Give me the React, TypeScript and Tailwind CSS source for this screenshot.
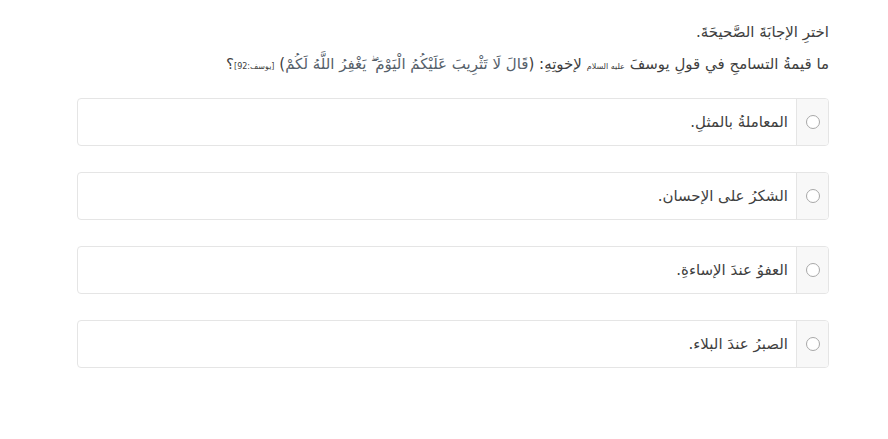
import React from "react";

const options = [
  "المعاملةُ بالمثلِ.",
  "الشكرُ على الإحسان.",
  "العفوُ عندَ الإساءةِ.",
  "الصبرُ عندَ البلاء.",
];

export default function App() {
  return (
    <div
      dir="rtl"
      className="min-h-[439px] w-[888px] bg-white pl-[77px] pr-[59px] pt-[16px]"
      style={{ fontFamily: '"DejaVu Sans", "Noto Sans", sans-serif' }}
    >
      <div className="text-[15px] leading-[32px] text-[#404040]">
        <p>اخترِ الإجابَةَ الصَّحيحَةَ.</p>
        <p>
          ما قيمةُ التسامحِ في قولِ يوسفَ{" "}
          <span className="text-[8px]">عليه السلام</span> لإخوتِهِ: (
          <span className="text-[#56606a]">
            قَالَ لَا تَثْرِيبَ عَلَيْكُمُ الْيَوْمَ ۖ يَغْفِرُ اللَّهُ لَكُمْ
          </span>
          ) <span className="text-[8px]">[يوسف:92]</span>؟
        </p>
      </div>

      <div className="mt-[15px] flex flex-col gap-[26px]">
        {options.map((opt) => (
          <div
            key={opt}
            className="flex h-[48px] items-stretch overflow-hidden rounded-[4px] border border-[#e5e5e5] bg-white"
          >
            <div className="flex w-[32px] items-center justify-center border-l border-[#e5e5e5] bg-[#f8f8f8]">
              <span className="block h-[14px] w-[14px] rounded-full border border-[#a8a8a8] bg-white" />
            </div>
            <div className="flex items-center pr-[8px] text-[15px] text-[#404040]">
              {opt}
            </div>
          </div>
        ))}
      </div>
    </div>
  );
}
